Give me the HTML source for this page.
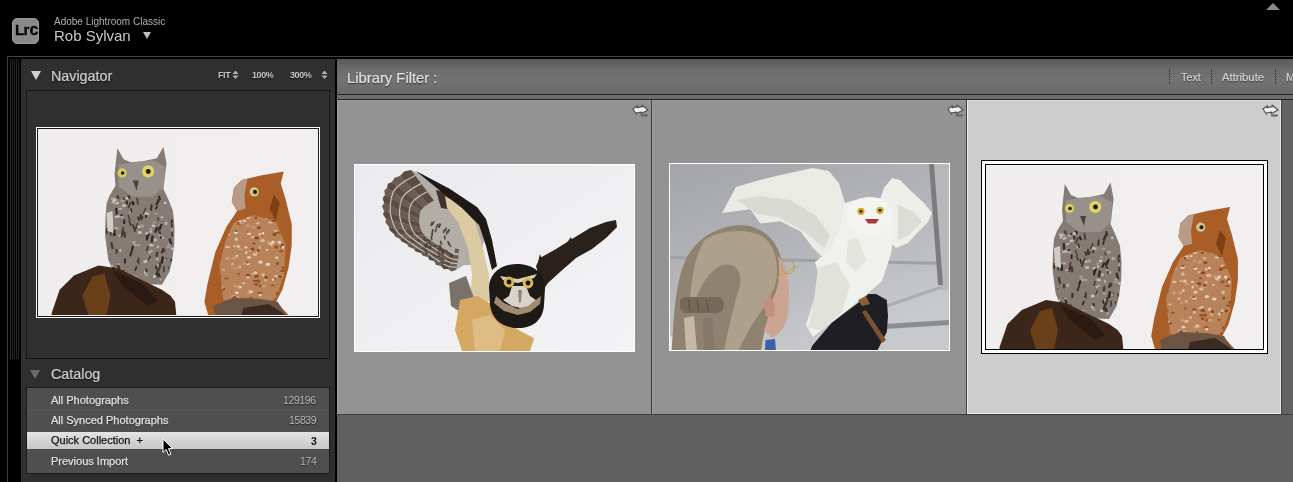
<!DOCTYPE html>
<html><head><meta charset="utf-8">
<style>
*{margin:0;padding:0;box-sizing:border-box}
html,body{width:1293px;height:482px;overflow:hidden;background:#000;font-family:"Liberation Sans",sans-serif;position:relative}
.a{position:absolute;white-space:nowrap;will-change:transform}
#logo{left:12px;top:18px;width:27px;height:26px;background:#8a8a8a;border-radius:5px;border:1px solid #9a9a9a}
#logotxt{left:14.5px;top:20.5px;color:#050505;font-weight:bold;font-size:15px;line-height:17px;letter-spacing:-0.6px;-webkit-text-stroke:0.3px #050505}
#app{left:54px;top:16px;color:#b0b0b0;font-size:10px;line-height:12px}
#user{left:54px;top:27px;color:#c8c8c8;font-size:15px;line-height:17px}
#sep{left:7px;top:56px;width:1286px;height:1px;background:#464646}
#sepv{left:7px;top:56px;width:1px;height:426px;background:#404040}
#leftp{left:21px;top:59px;width:314px;height:423px;background:#2f2f2f}
.stripe{top:59px;width:1px;height:300px;background:#262626}
#navbox{left:26px;top:90px;width:304px;height:269px;background:#303030;border:1px solid #171717}
.hdr{-webkit-text-stroke:0.2px currentColor;color:#cfcfcf;font-size:14.3px;line-height:16px;text-shadow:0 1px 1px #111}
.tri{width:0;height:0;border-left:5px solid transparent;border-right:5px solid transparent;border-top:9px solid #cfcfcf}
.zoom{color:#c4c4c4;font-size:9px;line-height:10px;font-weight:bold;letter-spacing:-0.4px;text-shadow:0 1px 1px #111}
#filter{left:337px;top:59px;width:956px;height:35px;background:linear-gradient(#5a5a5a,#6c6c6c 30%,#737373 60%,#6a6a6a)}
#fline1{left:337px;top:94px;width:956px;height:1px;background:#222}
#fstrip{left:337px;top:95px;width:956px;height:4px;background:#6d6d6d}
#fline2{left:337px;top:99px;width:956px;height:1px;background:#222}
.ftxt{-webkit-text-stroke:0.2px currentColor;color:#d4d4d4;font-size:11.3px;line-height:13px;text-shadow:0 1px 1px #333}
.dots{top:69px;width:1px;height:15px;background:repeating-linear-gradient(#2a2a2a 0 1px,transparent 1px 2px)}
#grid{left:337px;top:100px;width:956px;height:314px;background:#636363}
.cell{top:100px;height:314px;background:#939393;border-left:1px solid #a0a0a0;border-top:1px solid #9d9d9d}
#bottom{left:337px;top:414px;width:956px;height:68px;background:#5f5f5f;border-top:1px solid #3f3f3f}
#catlist{left:26px;top:387px;width:304px;height:87px;background:#4f4f4f;border:1px solid #1a1a1a}
.row{left:27px;width:302px;height:20px}
.rt{-webkit-text-stroke:0.25px currentColor;color:#e2e2e2;font-size:11px;line-height:13px;text-shadow:0 1px 1px #222}
.rn{color:#b8b8b8;font-size:10.5px;letter-spacing:-0.4px;line-height:13px;text-shadow:0 1px 1px #222}
</style></head><body>
<div class="a" id="logo"></div>
<div class="a" id="logotxt">Lr<span style="font-size:16px;margin-left:0.8px">c</span></div>
<div class="a" id="app">Adobe Lightroom Classic</div>
<div class="a" id="user">Rob Sylvan</div>
<div class="a" style="left:143px;top:32px;width:0;height:0;border-left:4px solid transparent;border-right:4px solid transparent;border-top:7px solid #c0c0c0"></div>
<div class="a" style="left:1266px;top:3px;width:0;height:0;border-left:7px solid transparent;border-right:7px solid transparent;border-bottom:7px solid #8a8a8a"></div>

<div class="a" id="sep"></div>
<div class="a" id="sepv"></div>
<div class="a stripe" style="left:10px"></div>
<div class="a stripe" style="left:12px"></div>
<div class="a stripe" style="left:14px"></div>
<div class="a stripe" style="left:16px"></div>
<div class="a stripe" style="left:18px"></div>
<div class="a" id="leftp"></div>

<!-- navigator header -->
<div class="a tri" style="left:31px;top:71px"></div>
<div class="a hdr" style="left:50.5px;top:68px">Navigator</div>
<div class="a zoom" style="left:218px;top:70px">FIT</div><svg class="a" style="left:232px;top:70px" width="7" height="10"><path d="M0.5,4 L3.5,0.5 L6.5,4 Z M0.5,5.5 L3.5,9 L6.5,5.5 Z" fill="#b4b4b4"/></svg>
<div class="a zoom" style="left:252px;top:70px">100%</div>
<div class="a zoom" style="left:290px;top:70px">300%</div><svg class="a" style="left:321px;top:70px" width="7" height="10"><path d="M0.5,4 L3.5,0.5 L6.5,4 Z M0.5,5.5 L3.5,9 L6.5,5.5 Z" fill="#b4b4b4"/></svg>
<div class="a" id="navbox"></div>

<!-- catalog -->
<div class="a tri" style="left:30px;top:370px;border-top-color:#6a6a6a"></div>
<div class="a hdr" style="left:50.5px;top:366px">Catalog</div>
<div class="a" id="catlist"></div>
<div class="a rt" style="left:51px;top:394px">All Photographs</div>
<div class="a rn" style="right:977px;top:394px">129196</div>
<div class="a" style="left:27px;top:410px;width:302px;height:1px;background:#585858"></div><div class="a rt" style="left:51px;top:414px">All Synced Photographs</div>
<div class="a rn" style="right:977px;top:414px">15839</div>
<div class="a row" style="top:432px;height:17px;background:linear-gradient(#e4e4e4,#d4d4d4 50%,#c8c8c8)"></div>
<div class="a rt" style="left:51px;top:434px;color:#111;text-shadow:none">Quick Collection&nbsp; +</div>
<div class="a rn" style="right:977px;top:435px;color:#111;font-weight:bold;text-shadow:none">3</div>
<div class="a rt" style="left:51px;top:454.5px">Previous Import</div>
<div class="a rn" style="right:977px;top:455px">174</div>

<!-- right -->
<div class="a" id="filter"></div>
<div class="a ftxt" style="left:347px;top:69.5px;font-size:14.8px;line-height:16px;color:#e2e2e2;text-shadow:0 1px 1px #2a2a2a">Library Filter :</div>
<div class="a dots" style="left:1169px"></div>
<div class="a ftxt" style="left:1181px;top:71px;font-size:10.8px">Text</div>
<div class="a dots" style="left:1211px"></div>
<div class="a ftxt" style="left:1222px;top:71px">Attribute</div>
<div class="a dots" style="left:1275px"></div>
<div class="a ftxt" style="left:1286px;top:71px">M</div>
<div class="a" id="fline1"></div>
<div class="a" id="fstrip"></div>
<div class="a" id="fline2"></div>
<div class="a" id="grid"></div>
<div class="a cell" style="left:337px;width:314px"></div>
<div class="a" style="left:651px;top:100px;width:1px;height:314px;background:#3c3c3c"></div>
<div class="a cell" style="left:652px;width:314px"></div>
<div class="a" style="left:966px;top:100px;width:1px;height:314px;background:#3c3c3c"></div>
<div class="a cell" style="left:967px;width:314px;background:#cdcdcd;border-left-color:#eee;border-top-color:#ddd;border-right:1px solid #eaeaea;border-bottom:1px solid #eaeaea"></div>
<div class="a" style="left:1281px;top:100px;width:1px;height:314px;background:#3c3c3c"></div>
<div class="a" id="bottom"></div>

<!-- photos -->
<div class="a" style="left:354px;top:164px;width:281px;height:188px;border:1px solid #fff;background:#f0f0f2"></div>
<div class="a" style="left:669px;top:163px;width:281px;height:188px;border:1px solid #fff;background:#d8dadc"></div>
<div class="a" style="left:981px;top:160px;width:287px;height:194px;border:1px solid #000;background:#fff"></div>
<div class="a" style="left:985px;top:164px;width:279px;height:186px;border:1px solid #000;background:#eeeeee"></div>
<div class="a" style="left:36px;top:127px;width:284px;height:191px;border:1px solid #fff;background:#222"></div>
<div class="a" style="left:37px;top:128px;width:282px;height:189px;border:1px solid #1a1a1a;background:#eeeeee"></div>
<svg class="a" style="left:0;top:0" width="1293" height="482" viewBox="0 0 1293 482">
<defs>
<clipPath id="wingclip"><path d="M411,170 L421,174 L450,193 L478,222 L484,240 L478,265 L464,265 L456,270 L448,269 L441,266 L434,261 L421,253 L407,244 L394,234 L387,222 L384,209 L385,195 L392,182 Z"/></clipPath>
<clipPath id="c1"><rect x="355" y="165" width="279" height="186"/></clipPath>
<clipPath id="c2"><rect x="670" y="164" width="279" height="186"/></clipPath>
<clipPath id="c3"><rect x="986" y="165" width="277" height="184"/></clipPath>
<linearGradient id="bg1" x1="0" y1="0" x2="1" y2="1"><stop offset="0" stop-color="#ebeaee"/><stop offset="1" stop-color="#f3f3f5"/></linearGradient>
<linearGradient id="bg2" x1="0" y1="0" x2="0.5" y2="1"><stop offset="0" stop-color="#a4a5a9"/><stop offset="0.5" stop-color="#b3b4b8"/><stop offset="1" stop-color="#c8c9cd"/></linearGradient>
<linearGradient id="bg3" x1="0" y1="0" x2="1" y2="0"><stop offset="0" stop-color="#efeded"/><stop offset="1" stop-color="#f1efef"/></linearGradient>
<g id="p3">
 <rect x="986" y="165" width="277" height="184" fill="url(#bg3)"/>
 <!-- grey owl -->
 <path d="M1064.8,184 L1071,195 L1078,198 L1090,197 L1104,194 L1110.5,182.6 L1113.6,199 L1112,212 L1110.5,224 L1116,236 L1120,246 L1121.5,262 L1121.2,279 L1119,296 L1116.6,306 L1109,319 L1085,318 L1060,304 L1055.7,294 L1052.6,270 L1053,252 L1054,239 L1057,231 L1063,221 L1062,210 L1063,200 Z" fill="#857b74"/>
 <path d="M1066,200 L1082,198 L1100,196 L1112,202 L1111,222 L1100,232 L1080,232 L1066,222 Z" fill="#98908a"/>
 <g clip-path="url(#gob)"><rect x="1084.2" y="279.3" width="2.9" height="2.3" fill="#a8a09a" transform="rotate(-16 1084.2 279.3)"/><rect x="1108.5" y="271.9" width="2.4" height="2.2" fill="#b8b2ae" transform="rotate(-20 1108.5 271.9)"/><rect x="1108.9" y="291.0" width="2.5" height="6.9" fill="#2c2420" transform="rotate(12 1108.9 291.0)"/><rect x="1097.9" y="284.8" width="2.1" height="1.6" fill="#b8b2ae" transform="rotate(5 1097.9 284.8)"/><rect x="1106.7" y="258.7" width="2.4" height="1.9" fill="#c8c4c0" transform="rotate(-0 1106.7 258.7)"/><rect x="1098.7" y="270.2" width="2.5" height="7.0" fill="#3a2e28" transform="rotate(10 1098.7 270.2)"/><rect x="1074.8" y="250.2" width="1.3" height="6.1" fill="#4a3c32" transform="rotate(-20 1074.8 250.2)"/><rect x="1073.1" y="235.9" width="2.1" height="3.9" fill="#3a2e28" transform="rotate(-2 1073.1 235.9)"/><rect x="1120.6" y="265.0" width="2.0" height="6.1" fill="#4a3c32" transform="rotate(-8 1120.6 265.0)"/><rect x="1074.5" y="231.3" width="2.4" height="3.5" fill="#2c2420" transform="rotate(-20 1074.5 231.3)"/><rect x="1057.1" y="300.1" width="1.9" height="4.8" fill="#3a2e28" transform="rotate(24 1057.1 300.1)"/><rect x="1106.1" y="266.9" width="1.7" height="7.0" fill="#3a2e28" transform="rotate(-12 1106.1 266.9)"/><rect x="1120.0" y="300.7" width="2.4" height="3.8" fill="#4a3c32" transform="rotate(25 1120.0 300.7)"/><rect x="1094.5" y="280.8" width="1.4" height="4.8" fill="#3a2e28" transform="rotate(14 1094.5 280.8)"/><rect x="1075.7" y="256.1" width="1.3" height="5.3" fill="#3a2e28" transform="rotate(-24 1075.7 256.1)"/><rect x="1078.4" y="284.7" width="2.0" height="6.3" fill="#3a2e28" transform="rotate(18 1078.4 284.7)"/><rect x="1065.6" y="243.6" width="3.6" height="1.9" fill="#b8b2ae" transform="rotate(-17 1065.6 243.6)"/><rect x="1096.4" y="278.7" width="2.8" height="2.2" fill="#b8b2ae" transform="rotate(-4 1096.4 278.7)"/><rect x="1060.2" y="233.4" width="2.5" height="2.6" fill="#c8c4c0" transform="rotate(-4 1060.2 233.4)"/><rect x="1115.4" y="273.2" width="2.4" height="6.9" fill="#3a2e28" transform="rotate(-14 1115.4 273.2)"/><rect x="1091.6" y="305.0" width="2.6" height="2.9" fill="#b8b2ae" transform="rotate(12 1091.6 305.0)"/><rect x="1057.8" y="266.2" width="1.3" height="4.1" fill="#2c2420" transform="rotate(4 1057.8 266.2)"/><rect x="1062.1" y="261.9" width="4.0" height="2.5" fill="#a8a09a" transform="rotate(1 1062.1 261.9)"/><rect x="1118.3" y="281.9" width="2.9" height="2.0" fill="#c8c4c0" transform="rotate(23 1118.3 281.9)"/><rect x="1054.5" y="286.0" width="2.1" height="4.3" fill="#3a2e28" transform="rotate(-21 1054.5 286.0)"/><rect x="1090.7" y="294.9" width="3.5" height="2.6" fill="#c8c4c0" transform="rotate(-7 1090.7 294.9)"/><rect x="1100.3" y="309.3" width="2.8" height="2.7" fill="#c8c4c0" transform="rotate(4 1100.3 309.3)"/><rect x="1096.1" y="263.6" width="3.2" height="1.6" fill="#a8a09a" transform="rotate(-19 1096.1 263.6)"/><rect x="1070.7" y="266.6" width="2.4" height="5.8" fill="#4a3c32" transform="rotate(-3 1070.7 266.6)"/><rect x="1110.8" y="237.4" width="2.1" height="2.4" fill="#c8c4c0" transform="rotate(-24 1110.8 237.4)"/><rect x="1119.1" y="239.9" width="3.3" height="2.2" fill="#b8b2ae" transform="rotate(-7 1119.1 239.9)"/><rect x="1062.9" y="283.8" width="2.2" height="4.4" fill="#4a3c32" transform="rotate(-0 1062.9 283.8)"/><rect x="1069.7" y="265.6" width="2.0" height="6.2" fill="#3a2e28" transform="rotate(19 1069.7 265.6)"/><rect x="1079.5" y="281.3" width="1.4" height="5.0" fill="#3a2e28" transform="rotate(11 1079.5 281.3)"/><rect x="1118.6" y="254.4" width="1.8" height="4.1" fill="#3a2e28" transform="rotate(17 1118.6 254.4)"/><rect x="1079.4" y="275.8" width="3.4" height="2.8" fill="#a8a09a" transform="rotate(-2 1079.4 275.8)"/><rect x="1058.2" y="232.8" width="2.1" height="2.6" fill="#a8a09a" transform="rotate(-7 1058.2 232.8)"/><rect x="1097.8" y="279.6" width="2.8" height="1.8" fill="#c8c4c0" transform="rotate(-13 1097.8 279.6)"/><rect x="1062.7" y="234.1" width="2.9" height="2.4" fill="#a8a09a" transform="rotate(7 1062.7 234.1)"/><rect x="1078.4" y="236.9" width="2.3" height="4.0" fill="#2c2420" transform="rotate(-24 1078.4 236.9)"/><rect x="1085.6" y="292.8" width="1.6" height="4.4" fill="#2c2420" transform="rotate(22 1085.6 292.8)"/><rect x="1087.5" y="317.7" width="2.3" height="5.8" fill="#3a2e28" transform="rotate(-21 1087.5 317.7)"/><rect x="1117.3" y="293.6" width="1.8" height="5.5" fill="#3a2e28" transform="rotate(-6 1117.3 293.6)"/><rect x="1092.2" y="307.4" width="3.9" height="2.2" fill="#a8a09a" transform="rotate(24 1092.2 307.4)"/><rect x="1059.8" y="306.2" width="3.8" height="1.7" fill="#b8b2ae" transform="rotate(20 1059.8 306.2)"/><rect x="1120.7" y="316.0" width="2.2" height="4.3" fill="#2c2420" transform="rotate(18 1120.7 316.0)"/><rect x="1077.0" y="237.3" width="1.9" height="6.1" fill="#4a3c32" transform="rotate(21 1077.0 237.3)"/><rect x="1068.1" y="306.3" width="1.2" height="5.1" fill="#2c2420" transform="rotate(14 1068.1 306.3)"/><rect x="1062.7" y="243.1" width="2.1" height="6.4" fill="#2c2420" transform="rotate(-3 1062.7 243.1)"/><rect x="1113.7" y="280.9" width="3.5" height="2.2" fill="#a8a09a" transform="rotate(-10 1113.7 280.9)"/><rect x="1103.3" y="286.2" width="2.3" height="5.2" fill="#4a3c32" transform="rotate(9 1103.3 286.2)"/><rect x="1118.9" y="306.6" width="2.6" height="1.7" fill="#a8a09a" transform="rotate(1 1118.9 306.6)"/><rect x="1092.5" y="247.7" width="1.9" height="5.4" fill="#3a2e28" transform="rotate(2 1092.5 247.7)"/><rect x="1056.0" y="310.7" width="2.5" height="3.5" fill="#3a2e28" transform="rotate(10 1056.0 310.7)"/><rect x="1057.5" y="277.4" width="2.4" height="6.7" fill="#4a3c32" transform="rotate(-13 1057.5 277.4)"/><rect x="1087.0" y="259.9" width="3.9" height="2.9" fill="#a8a09a" transform="rotate(-9 1087.0 259.9)"/><rect x="1066.2" y="284.4" width="2.3" height="2.7" fill="#b8b2ae" transform="rotate(-23 1066.2 284.4)"/><rect x="1063.7" y="231.0" width="2.1" height="4.0" fill="#4a3c32" transform="rotate(-20 1063.7 231.0)"/><rect x="1103.4" y="240.8" width="1.5" height="3.8" fill="#2c2420" transform="rotate(19 1103.4 240.8)"/><rect x="1054.6" y="285.7" width="3.2" height="2.3" fill="#a8a09a" transform="rotate(2 1054.6 285.7)"/><rect x="1068.1" y="249.0" width="2.0" height="3.5" fill="#2c2420" transform="rotate(6 1068.1 249.0)"/><rect x="1077.0" y="245.9" width="3.8" height="1.8" fill="#b8b2ae" transform="rotate(19 1077.0 245.9)"/><rect x="1062.2" y="251.1" width="2.5" height="1.6" fill="#c8c4c0" transform="rotate(2 1062.2 251.1)"/><rect x="1101.6" y="247.7" width="3.6" height="1.6" fill="#a8a09a" transform="rotate(9 1101.6 247.7)"/><rect x="1115.9" y="315.2" width="1.9" height="6.0" fill="#2c2420" transform="rotate(25 1115.9 315.2)"/><rect x="1110.5" y="300.7" width="1.2" height="6.0" fill="#2c2420" transform="rotate(1 1110.5 300.7)"/><rect x="1092.2" y="242.9" width="1.5" height="6.4" fill="#4a3c32" transform="rotate(21 1092.2 242.9)"/><rect x="1059.6" y="235.5" width="2.9" height="2.6" fill="#c8c4c0" transform="rotate(-5 1059.6 235.5)"/><rect x="1082.4" y="261.2" width="1.7" height="5.5" fill="#3a2e28" transform="rotate(17 1082.4 261.2)"/><rect x="1065.5" y="269.9" width="2.8" height="1.8" fill="#b8b2ae" transform="rotate(-20 1065.5 269.9)"/><rect x="1107.7" y="258.5" width="2.3" height="6.5" fill="#2c2420" transform="rotate(22 1107.7 258.5)"/><rect x="1092.3" y="246.8" width="2.7" height="2.6" fill="#c8c4c0" transform="rotate(21 1092.3 246.8)"/><rect x="1104.4" y="298.5" width="2.8" height="2.8" fill="#a8a09a" transform="rotate(10 1104.4 298.5)"/><rect x="1105.9" y="297.3" width="2.1" height="3.3" fill="#4a3c32" transform="rotate(-10 1105.9 297.3)"/><rect x="1060.0" y="308.1" width="3.8" height="1.6" fill="#c8c4c0" transform="rotate(22 1060.0 308.1)"/><rect x="1099.0" y="259.7" width="3.1" height="2.3" fill="#c8c4c0" transform="rotate(1 1099.0 259.7)"/><rect x="1087.3" y="248.8" width="1.7" height="5.3" fill="#3a2e28" transform="rotate(6 1087.3 248.8)"/><rect x="1104.0" y="252.6" width="1.3" height="3.8" fill="#4a3c32" transform="rotate(-24 1104.0 252.6)"/><rect x="1070.8" y="254.3" width="1.9" height="4.7" fill="#2c2420" transform="rotate(3 1070.8 254.3)"/><rect x="1121.7" y="286.1" width="2.2" height="2.4" fill="#b8b2ae" transform="rotate(-6 1121.7 286.1)"/><rect x="1117.8" y="264.0" width="3.7" height="2.3" fill="#a8a09a" transform="rotate(-22 1117.8 264.0)"/><rect x="1118.2" y="267.0" width="2.0" height="4.5" fill="#4a3c32" transform="rotate(-1 1118.2 267.0)"/><rect x="1071.6" y="311.8" width="3.5" height="1.5" fill="#b8b2ae" transform="rotate(4 1071.6 311.8)"/><rect x="1096.7" y="266.0" width="2.1" height="2.0" fill="#c8c4c0" transform="rotate(-22 1096.7 266.0)"/><rect x="1121.2" y="313.1" width="2.4" height="4.7" fill="#4a3c32" transform="rotate(-12 1121.2 313.1)"/><rect x="1105.1" y="234.0" width="2.3" height="6.6" fill="#3a2e28" transform="rotate(24 1105.1 234.0)"/><rect x="1109.4" y="283.1" width="2.0" height="4.8" fill="#3a2e28" transform="rotate(18 1109.4 283.1)"/><rect x="1077.6" y="243.6" width="1.4" height="4.7" fill="#2c2420" transform="rotate(-12 1077.6 243.6)"/><rect x="1093.2" y="266.9" width="3.1" height="3.0" fill="#c8c4c0" transform="rotate(12 1093.2 266.9)"/><rect x="1069.5" y="240.0" width="3.6" height="2.4" fill="#c8c4c0" transform="rotate(-11 1069.5 240.0)"/><rect x="1095.1" y="293.8" width="2.4" height="1.9" fill="#b8b2ae" transform="rotate(-16 1095.1 293.8)"/><rect x="1070.2" y="316.2" width="3.8" height="1.6" fill="#b8b2ae" transform="rotate(-25 1070.2 316.2)"/><rect x="1070.9" y="232.4" width="1.5" height="4.1" fill="#3a2e28" transform="rotate(21 1070.9 232.4)"/><rect x="1064.1" y="250.7" width="3.0" height="2.0" fill="#c8c4c0" transform="rotate(-8 1064.1 250.7)"/><rect x="1104.4" y="303.8" width="1.4" height="6.2" fill="#2c2420" transform="rotate(17 1104.4 303.8)"/><rect x="1106.1" y="269.1" width="2.8" height="1.7" fill="#b8b2ae" transform="rotate(8 1106.1 269.1)"/><rect x="1121.3" y="258.6" width="2.2" height="6.7" fill="#4a3c32" transform="rotate(8 1121.3 258.6)"/><rect x="1093.1" y="270.7" width="1.9" height="4.7" fill="#2c2420" transform="rotate(-1 1093.1 270.7)"/><rect x="1100.3" y="256.3" width="2.2" height="1.8" fill="#a8a09a" transform="rotate(5 1100.3 256.3)"/><rect x="1101.0" y="273.5" width="2.7" height="2.8" fill="#b8b2ae" transform="rotate(-7 1101.0 273.5)"/><rect x="1103.1" y="262.2" width="2.1" height="5.3" fill="#2c2420" transform="rotate(21 1103.1 262.2)"/><rect x="1083.2" y="300.7" width="1.6" height="4.6" fill="#2c2420" transform="rotate(20 1083.2 300.7)"/><rect x="1070.1" y="261.8" width="1.7" height="4.6" fill="#4a3c32" transform="rotate(15 1070.1 261.8)"/><rect x="1104.0" y="262.4" width="1.4" height="5.4" fill="#3a2e28" transform="rotate(-16 1104.0 262.4)"/><rect x="1105.4" y="307.5" width="1.2" height="5.1" fill="#2c2420" transform="rotate(-17 1105.4 307.5)"/><rect x="1073.4" y="232.0" width="2.8" height="2.4" fill="#c8c4c0" transform="rotate(14 1073.4 232.0)"/><rect x="1058.8" y="237.2" width="3.8" height="1.6" fill="#a8a09a" transform="rotate(8 1058.8 237.2)"/><rect x="1059.7" y="301.8" width="2.1" height="5.0" fill="#2c2420" transform="rotate(-8 1059.7 301.8)"/><rect x="1084.7" y="260.8" width="2.7" height="1.7" fill="#c8c4c0" transform="rotate(2 1084.7 260.8)"/><rect x="1102.7" y="292.3" width="2.8" height="2.7" fill="#a8a09a" transform="rotate(-8 1102.7 292.3)"/><rect x="1053.3" y="263.3" width="1.8" height="5.2" fill="#3a2e28" transform="rotate(1 1053.3 263.3)"/><rect x="1102.0" y="300.6" width="1.7" height="3.6" fill="#2c2420" transform="rotate(-17 1102.0 300.6)"/><rect x="1096.8" y="290.2" width="1.7" height="5.1" fill="#4a3c32" transform="rotate(23 1096.8 290.2)"/><rect x="1057.1" y="257.1" width="2.0" height="6.1" fill="#3a2e28" transform="rotate(21 1057.1 257.1)"/><rect x="1105.0" y="231.5" width="2.2" height="4.3" fill="#3a2e28" transform="rotate(-16 1105.0 231.5)"/><rect x="1068.0" y="250.7" width="3.2" height="1.8" fill="#b8b2ae" transform="rotate(20 1068.0 250.7)"/><rect x="1080.8" y="310.1" width="3.3" height="2.9" fill="#a8a09a" transform="rotate(-1 1080.8 310.1)"/><rect x="1071.0" y="308.1" width="2.7" height="2.3" fill="#b8b2ae" transform="rotate(-1 1071.0 308.1)"/><rect x="1068.2" y="234.4" width="3.6" height="2.1" fill="#a8a09a" transform="rotate(15 1068.2 234.4)"/><rect x="1106.4" y="299.3" width="2.4" height="6.6" fill="#4a3c32" transform="rotate(20 1106.4 299.3)"/><rect x="1084.1" y="251.7" width="2.3" height="4.7" fill="#4a3c32" transform="rotate(-18 1084.1 251.7)"/><rect x="1115.7" y="301.3" width="2.2" height="5.5" fill="#2c2420" transform="rotate(2 1115.7 301.3)"/><rect x="1063.4" y="297.8" width="2.3" height="6.4" fill="#3a2e28" transform="rotate(-21 1063.4 297.8)"/><rect x="1071.6" y="293.1" width="1.8" height="4.9" fill="#2c2420" transform="rotate(4 1071.6 293.1)"/><rect x="1112.2" y="256.7" width="2.8" height="2.9" fill="#b8b2ae" transform="rotate(14 1112.2 256.7)"/><rect x="1083.4" y="233.3" width="1.8" height="6.8" fill="#4a3c32" transform="rotate(-9 1083.4 233.3)"/><rect x="1081.0" y="279.0" width="3.3" height="1.6" fill="#b8b2ae" transform="rotate(9 1081.0 279.0)"/><rect x="1060.3" y="264.7" width="2.5" height="6.3" fill="#2c2420" transform="rotate(-3 1060.3 264.7)"/><rect x="1112.6" y="292.6" width="1.6" height="3.5" fill="#3a2e28" transform="rotate(18 1112.6 292.6)"/><rect x="1111.3" y="293.3" width="2.3" height="2.4" fill="#a8a09a" transform="rotate(12 1111.3 293.3)"/><rect x="1118.8" y="296.4" width="2.2" height="1.8" fill="#c8c4c0" transform="rotate(12 1118.8 296.4)"/><rect x="1075.7" y="313.2" width="3.4" height="2.0" fill="#c8c4c0" transform="rotate(-20 1075.7 313.2)"/><rect x="1062.7" y="238.3" width="3.4" height="1.8" fill="#c8c4c0" transform="rotate(-23 1062.7 238.3)"/><rect x="1085.0" y="291.9" width="1.2" height="6.9" fill="#4a3c32" transform="rotate(-5 1085.0 291.9)"/><rect x="1058.0" y="311.0" width="1.9" height="5.6" fill="#3a2e28" transform="rotate(16 1058.0 311.0)"/><rect x="1079.6" y="259.2" width="1.2" height="4.6" fill="#2c2420" transform="rotate(-9 1079.6 259.2)"/><rect x="1107.4" y="251.6" width="3.1" height="1.9" fill="#b8b2ae" transform="rotate(-8 1107.4 251.6)"/><rect x="1097.9" y="239.4" width="1.9" height="6.2" fill="#3a2e28" transform="rotate(6 1097.9 239.4)"/><rect x="1063.9" y="297.5" width="3.1" height="2.0" fill="#a8a09a" transform="rotate(1 1063.9 297.5)"/><rect x="1092.6" y="247.4" width="4.0" height="2.6" fill="#b8b2ae" transform="rotate(3 1092.6 247.4)"/><rect x="1054.8" y="288.0" width="2.3" height="2.2" fill="#c8c4c0" transform="rotate(10 1054.8 288.0)"/><rect x="1075.7" y="311.8" width="1.8" height="3.5" fill="#2c2420" transform="rotate(-18 1075.7 311.8)"/><rect x="1115.4" y="277.8" width="3.1" height="1.9" fill="#a8a09a" transform="rotate(25 1115.4 277.8)"/><rect x="1109.4" y="282.9" width="2.3" height="4.2" fill="#4a3c32" transform="rotate(-13 1109.4 282.9)"/><rect x="1092.6" y="303.1" width="1.9" height="3.3" fill="#3a2e28" transform="rotate(-5 1092.6 303.1)"/><rect x="1107.0" y="311.8" width="2.3" height="2.6" fill="#a8a09a" transform="rotate(20 1107.0 311.8)"/><rect x="1095.5" y="286.3" width="2.3" height="2.1" fill="#b8b2ae" transform="rotate(-18 1095.5 286.3)"/><rect x="1079.7" y="280.1" width="1.9" height="4.1" fill="#2c2420" transform="rotate(22 1079.7 280.1)"/><rect x="1056.7" y="299.0" width="3.6" height="2.1" fill="#c8c4c0" transform="rotate(5 1056.7 299.0)"/><rect x="1085.4" y="266.2" width="3.4" height="2.6" fill="#c8c4c0" transform="rotate(-1 1085.4 266.2)"/><rect x="1121.6" y="303.8" width="2.8" height="2.2" fill="#a8a09a" transform="rotate(-19 1121.6 303.8)"/><rect x="1117.8" y="259.1" width="1.7" height="3.1" fill="#3a2e28" transform="rotate(-10 1117.8 259.1)"/><rect x="1095.5" y="268.1" width="1.6" height="6.2" fill="#2c2420" transform="rotate(19 1095.5 268.1)"/><rect x="1069.9" y="304.3" width="2.3" height="6.9" fill="#4a3c32" transform="rotate(10 1069.9 304.3)"/><rect x="1089.3" y="251.0" width="1.7" height="3.9" fill="#3a2e28" transform="rotate(25 1089.3 251.0)"/><rect x="1103.4" y="306.7" width="1.9" height="5.3" fill="#3a2e28" transform="rotate(-14 1103.4 306.7)"/><rect x="1104.5" y="279.9" width="2.2" height="2.7" fill="#b8b2ae" transform="rotate(19 1104.5 279.9)"/><rect x="1092.7" y="269.9" width="2.1" height="3.1" fill="#3a2e28" transform="rotate(-22 1092.7 269.9)"/><rect x="1114.8" y="301.8" width="1.7" height="5.3" fill="#3a2e28" transform="rotate(-10 1114.8 301.8)"/><rect x="1084.4" y="257.6" width="1.4" height="6.1" fill="#4a3c32" transform="rotate(19 1084.4 257.6)"/></g>
 <path d="M1054,248 L1060,246 L1061,268 L1055,266 Z" fill="#d0ccc8"/>
 <circle cx="1069.5" cy="208.5" r="4.6" fill="#dccc5a"/><circle cx="1070" cy="208.5" r="1.8" fill="#181818"/>
 <circle cx="1095.3" cy="207" r="6.1" fill="#e2d264"/><circle cx="1095.5" cy="207" r="2.4" fill="#181818"/>
 <path d="M1080,216 L1086,216 L1084,226 Z" fill="#4a4038"/>
 <!-- rufous owl -->
 <path d="M1230,207 L1227,219 L1231.7,234 L1237.9,259 L1237.9,280 L1234.8,302 L1228.6,324 L1222.4,336 L1234.8,349 L1155,349 L1151.2,336 L1154.3,318 L1162,287 L1173,262 L1183.7,246 L1178.4,237 L1180.6,223 L1188.3,215.5 L1207,211 Z" fill="#a95d27"/>
 <path d="M1180,258 L1200,250 L1222,256 L1232,280 L1230,310 L1222,334 L1195,340 L1170,334 L1166,300 L1172,276 Z" fill="#b8825a"/>
 <g clip-path="url(#gor)"><ellipse cx="1204.8" cy="315.3" rx="2.2" ry="1.7" fill="#9c5420"/><ellipse cx="1206.9" cy="296.6" rx="2.3" ry="1.6" fill="#e6d2bc"/><ellipse cx="1206.7" cy="329.3" rx="1.4" ry="1.3" fill="#e6d2bc"/><ellipse cx="1187.4" cy="259.0" rx="1.6" ry="1.5" fill="#8e4a1c"/><ellipse cx="1180.1" cy="330.6" rx="2.2" ry="1.0" fill="#dcc0a4"/><ellipse cx="1170.0" cy="304.3" rx="1.4" ry="0.9" fill="#dcc0a4"/><ellipse cx="1175.1" cy="269.0" rx="2.5" ry="1.6" fill="#c89c78"/><ellipse cx="1182.6" cy="267.5" rx="2.3" ry="1.4" fill="#e6d2bc"/><ellipse cx="1227.8" cy="310.8" rx="2.5" ry="1.7" fill="#c89c78"/><ellipse cx="1161.6" cy="286.5" rx="2.4" ry="1.1" fill="#c89c78"/><ellipse cx="1181.7" cy="303.1" rx="1.3" ry="1.5" fill="#c89c78"/><ellipse cx="1164.8" cy="281.3" rx="1.6" ry="1.5" fill="#e6d2bc"/><ellipse cx="1194.6" cy="312.0" rx="1.3" ry="1.7" fill="#dcc0a4"/><ellipse cx="1228.3" cy="281.5" rx="1.8" ry="1.4" fill="#8e4a1c"/><ellipse cx="1186.4" cy="300.9" rx="1.3" ry="0.9" fill="#e6d2bc"/><ellipse cx="1204.9" cy="334.0" rx="1.4" ry="1.1" fill="#8e4a1c"/><ellipse cx="1184.8" cy="281.2" rx="1.9" ry="1.6" fill="#dcc0a4"/><ellipse cx="1202.5" cy="318.7" rx="1.7" ry="1.2" fill="#8e4a1c"/><ellipse cx="1228.1" cy="258.0" rx="1.7" ry="1.4" fill="#e6d2bc"/><ellipse cx="1184.5" cy="331.3" rx="1.9" ry="1.2" fill="#c89c78"/><ellipse cx="1182.0" cy="320.3" rx="2.0" ry="1.5" fill="#c89c78"/><ellipse cx="1231.8" cy="264.2" rx="1.3" ry="1.7" fill="#d4b090"/><ellipse cx="1226.5" cy="252.8" rx="2.2" ry="1.2" fill="#c89c78"/><ellipse cx="1192.8" cy="287.1" rx="1.3" ry="1.7" fill="#dcc0a4"/><ellipse cx="1217.7" cy="279.4" rx="1.5" ry="1.7" fill="#d4b090"/><ellipse cx="1228.4" cy="305.5" rx="2.2" ry="1.0" fill="#8e4a1c"/><ellipse cx="1186.9" cy="255.2" rx="1.8" ry="1.0" fill="#d4b090"/><ellipse cx="1221.4" cy="335.9" rx="1.8" ry="1.3" fill="#9c5420"/><ellipse cx="1182.9" cy="274.1" rx="1.8" ry="1.7" fill="#dcc0a4"/><ellipse cx="1187.1" cy="337.0" rx="2.4" ry="1.4" fill="#8e4a1c"/><ellipse cx="1222.5" cy="265.9" rx="1.9" ry="1.3" fill="#d4b090"/><ellipse cx="1222.5" cy="281.8" rx="2.2" ry="1.6" fill="#9c5420"/><ellipse cx="1202.3" cy="253.0" rx="1.6" ry="1.4" fill="#9c5420"/><ellipse cx="1180.2" cy="292.7" rx="2.2" ry="1.5" fill="#c89c78"/><ellipse cx="1228.9" cy="279.9" rx="1.5" ry="1.6" fill="#8e4a1c"/><ellipse cx="1199.4" cy="272.1" rx="2.1" ry="1.3" fill="#d4b090"/><ellipse cx="1206.6" cy="320.2" rx="1.7" ry="1.4" fill="#9c5420"/><ellipse cx="1227.5" cy="285.9" rx="2.4" ry="1.0" fill="#9c5420"/><ellipse cx="1192.4" cy="282.1" rx="1.7" ry="1.0" fill="#e6d2bc"/><ellipse cx="1174.3" cy="281.9" rx="2.3" ry="1.1" fill="#dcc0a4"/><ellipse cx="1211.8" cy="314.3" rx="1.5" ry="1.6" fill="#d4b090"/><ellipse cx="1197.2" cy="332.4" rx="1.6" ry="1.4" fill="#9c5420"/><ellipse cx="1179.5" cy="337.6" rx="1.5" ry="1.4" fill="#d4b090"/><ellipse cx="1206.8" cy="269.3" rx="2.1" ry="1.4" fill="#dcc0a4"/><ellipse cx="1231.0" cy="336.2" rx="1.5" ry="1.7" fill="#dcc0a4"/><ellipse cx="1182.8" cy="266.0" rx="1.5" ry="0.9" fill="#8e4a1c"/><ellipse cx="1185.3" cy="308.3" rx="1.3" ry="1.1" fill="#9c5420"/><ellipse cx="1225.0" cy="250.1" rx="1.8" ry="1.1" fill="#8e4a1c"/><ellipse cx="1222.4" cy="310.6" rx="1.9" ry="1.7" fill="#d4b090"/><ellipse cx="1204.2" cy="258.3" rx="1.9" ry="1.2" fill="#d4b090"/><ellipse cx="1181.1" cy="280.9" rx="1.4" ry="1.2" fill="#d4b090"/><ellipse cx="1206.2" cy="282.5" rx="1.4" ry="1.4" fill="#d4b090"/><ellipse cx="1194.3" cy="267.5" rx="1.4" ry="1.0" fill="#9c5420"/><ellipse cx="1160.1" cy="259.5" rx="2.0" ry="1.4" fill="#e6d2bc"/><ellipse cx="1183.4" cy="327.1" rx="2.0" ry="1.3" fill="#e6d2bc"/><ellipse cx="1195.5" cy="292.2" rx="2.1" ry="1.2" fill="#e6d2bc"/><ellipse cx="1202.9" cy="272.9" rx="2.5" ry="1.3" fill="#8e4a1c"/><ellipse cx="1161.4" cy="333.2" rx="1.6" ry="1.7" fill="#e6d2bc"/><ellipse cx="1194.3" cy="260.7" rx="2.0" ry="1.3" fill="#c89c78"/><ellipse cx="1162.9" cy="262.0" rx="1.7" ry="1.3" fill="#d4b090"/><ellipse cx="1179.7" cy="332.3" rx="2.2" ry="1.1" fill="#c89c78"/><ellipse cx="1220.8" cy="313.5" rx="1.6" ry="1.3" fill="#8e4a1c"/><ellipse cx="1197.3" cy="326.0" rx="2.4" ry="1.7" fill="#dcc0a4"/><ellipse cx="1214.7" cy="276.5" rx="1.9" ry="1.2" fill="#c89c78"/><ellipse cx="1212.7" cy="252.3" rx="1.7" ry="1.5" fill="#d4b090"/><ellipse cx="1169.5" cy="250.2" rx="1.9" ry="1.5" fill="#dcc0a4"/><ellipse cx="1223.9" cy="298.0" rx="1.3" ry="1.6" fill="#8e4a1c"/><ellipse cx="1202.8" cy="310.6" rx="2.4" ry="1.5" fill="#8e4a1c"/><ellipse cx="1194.3" cy="310.0" rx="2.1" ry="1.7" fill="#8e4a1c"/><ellipse cx="1219.8" cy="255.8" rx="2.3" ry="1.5" fill="#8e4a1c"/><ellipse cx="1201.9" cy="307.1" rx="1.8" ry="1.2" fill="#e6d2bc"/><ellipse cx="1194.4" cy="298.3" rx="1.9" ry="1.2" fill="#e6d2bc"/><ellipse cx="1190.6" cy="297.6" rx="1.3" ry="1.5" fill="#c89c78"/><ellipse cx="1219.0" cy="319.7" rx="2.1" ry="0.9" fill="#9c5420"/><ellipse cx="1190.9" cy="256.0" rx="1.8" ry="1.3" fill="#dcc0a4"/><ellipse cx="1220.6" cy="269.3" rx="2.1" ry="1.7" fill="#9c5420"/><ellipse cx="1224.4" cy="337.5" rx="2.1" ry="1.3" fill="#e6d2bc"/><ellipse cx="1204.0" cy="286.4" rx="1.5" ry="1.4" fill="#dcc0a4"/><ellipse cx="1200.0" cy="308.1" rx="2.2" ry="1.1" fill="#d4b090"/><ellipse cx="1201.4" cy="315.3" rx="2.3" ry="1.0" fill="#8e4a1c"/><ellipse cx="1166.6" cy="310.3" rx="1.9" ry="1.2" fill="#9c5420"/><ellipse cx="1186.9" cy="254.9" rx="2.1" ry="1.0" fill="#9c5420"/><ellipse cx="1208.8" cy="275.5" rx="2.4" ry="1.4" fill="#e6d2bc"/><ellipse cx="1179.0" cy="298.5" rx="1.6" ry="1.5" fill="#d4b090"/><ellipse cx="1230.2" cy="321.1" rx="2.3" ry="1.3" fill="#8e4a1c"/><ellipse cx="1172.9" cy="312.8" rx="2.1" ry="1.0" fill="#9c5420"/><ellipse cx="1162.6" cy="326.0" rx="1.9" ry="1.3" fill="#8e4a1c"/><ellipse cx="1223.1" cy="292.3" rx="1.7" ry="1.6" fill="#dcc0a4"/><ellipse cx="1199.0" cy="283.8" rx="2.3" ry="1.7" fill="#8e4a1c"/><ellipse cx="1209.0" cy="269.6" rx="1.4" ry="1.7" fill="#9c5420"/><ellipse cx="1195.4" cy="268.6" rx="2.1" ry="1.2" fill="#e6d2bc"/><ellipse cx="1180.9" cy="331.9" rx="2.1" ry="1.6" fill="#8e4a1c"/><ellipse cx="1169.8" cy="323.1" rx="2.1" ry="1.6" fill="#8e4a1c"/><ellipse cx="1229.2" cy="281.9" rx="1.3" ry="1.7" fill="#e6d2bc"/><ellipse cx="1213.3" cy="284.8" rx="1.4" ry="0.9" fill="#e6d2bc"/><ellipse cx="1174.1" cy="293.1" rx="2.4" ry="1.5" fill="#c89c78"/><ellipse cx="1160.0" cy="291.4" rx="2.4" ry="1.4" fill="#8e4a1c"/><ellipse cx="1183.3" cy="290.6" rx="1.5" ry="1.5" fill="#dcc0a4"/><ellipse cx="1187.0" cy="283.9" rx="2.4" ry="1.0" fill="#c89c78"/><ellipse cx="1167.9" cy="322.0" rx="2.2" ry="1.5" fill="#dcc0a4"/><ellipse cx="1194.7" cy="252.8" rx="2.4" ry="1.2" fill="#dcc0a4"/><ellipse cx="1209.5" cy="309.3" rx="1.8" ry="1.7" fill="#dcc0a4"/><ellipse cx="1216.5" cy="278.5" rx="1.8" ry="1.1" fill="#e6d2bc"/><ellipse cx="1162.4" cy="312.9" rx="2.0" ry="1.5" fill="#d4b090"/><ellipse cx="1188.9" cy="335.7" rx="1.7" ry="1.2" fill="#8e4a1c"/><ellipse cx="1186.0" cy="255.9" rx="2.5" ry="1.3" fill="#e6d2bc"/><ellipse cx="1172.6" cy="268.4" rx="1.3" ry="1.4" fill="#9c5420"/><ellipse cx="1230.2" cy="250.6" rx="1.3" ry="1.6" fill="#8e4a1c"/><ellipse cx="1172.2" cy="252.9" rx="2.3" ry="1.6" fill="#d4b090"/><ellipse cx="1185.2" cy="258.3" rx="1.3" ry="1.7" fill="#8e4a1c"/><ellipse cx="1166.6" cy="291.5" rx="2.1" ry="1.4" fill="#8e4a1c"/><ellipse cx="1188.6" cy="255.3" rx="1.6" ry="1.2" fill="#c89c78"/><ellipse cx="1206.1" cy="327.0" rx="2.4" ry="1.1" fill="#9c5420"/><ellipse cx="1196.6" cy="285.4" rx="1.9" ry="1.0" fill="#c89c78"/><ellipse cx="1216.9" cy="257.6" rx="2.5" ry="1.0" fill="#dcc0a4"/><ellipse cx="1221.7" cy="268.9" rx="1.3" ry="1.4" fill="#8e4a1c"/><ellipse cx="1190.5" cy="317.6" rx="1.9" ry="1.0" fill="#dcc0a4"/><ellipse cx="1225.7" cy="277.1" rx="1.8" ry="1.6" fill="#e6d2bc"/><ellipse cx="1199.9" cy="262.2" rx="1.9" ry="1.6" fill="#c89c78"/><ellipse cx="1219.0" cy="277.5" rx="1.4" ry="1.0" fill="#e6d2bc"/><ellipse cx="1210.2" cy="320.3" rx="2.5" ry="1.5" fill="#c89c78"/><ellipse cx="1164.4" cy="311.7" rx="1.3" ry="1.1" fill="#c89c78"/><ellipse cx="1223.6" cy="327.9" rx="1.3" ry="1.6" fill="#8e4a1c"/><ellipse cx="1214.2" cy="298.9" rx="2.4" ry="1.5" fill="#e6d2bc"/><ellipse cx="1201.4" cy="288.9" rx="2.3" ry="1.5" fill="#dcc0a4"/><ellipse cx="1212.4" cy="311.7" rx="1.6" ry="1.6" fill="#8e4a1c"/><ellipse cx="1200.5" cy="278.3" rx="1.6" ry="1.0" fill="#8e4a1c"/><ellipse cx="1208.7" cy="275.1" rx="1.3" ry="1.5" fill="#d4b090"/><ellipse cx="1162.0" cy="260.7" rx="2.5" ry="1.6" fill="#8e4a1c"/><ellipse cx="1221.9" cy="333.5" rx="2.0" ry="1.1" fill="#8e4a1c"/><ellipse cx="1169.0" cy="267.7" rx="1.7" ry="1.0" fill="#d4b090"/><ellipse cx="1219.5" cy="314.0" rx="1.4" ry="1.4" fill="#e6d2bc"/><ellipse cx="1205.4" cy="262.7" rx="2.2" ry="1.3" fill="#8e4a1c"/><ellipse cx="1168.5" cy="277.9" rx="2.4" ry="1.3" fill="#8e4a1c"/><ellipse cx="1172.3" cy="254.3" rx="2.1" ry="1.0" fill="#8e4a1c"/><ellipse cx="1229.8" cy="302.4" rx="1.4" ry="1.6" fill="#8e4a1c"/><ellipse cx="1209.4" cy="268.3" rx="1.3" ry="1.7" fill="#e6d2bc"/><ellipse cx="1194.7" cy="327.6" rx="1.7" ry="1.1" fill="#c89c78"/><ellipse cx="1219.2" cy="276.7" rx="1.9" ry="1.5" fill="#e6d2bc"/><ellipse cx="1186.4" cy="321.2" rx="2.3" ry="1.5" fill="#dcc0a4"/><ellipse cx="1204.5" cy="285.3" rx="1.4" ry="1.6" fill="#8e4a1c"/><ellipse cx="1187.5" cy="258.3" rx="1.7" ry="1.5" fill="#c89c78"/><ellipse cx="1224.8" cy="267.5" rx="2.2" ry="1.2" fill="#9c5420"/><ellipse cx="1193.9" cy="297.0" rx="1.4" ry="1.1" fill="#9c5420"/><ellipse cx="1160.7" cy="295.0" rx="2.0" ry="1.1" fill="#8e4a1c"/><ellipse cx="1161.6" cy="309.7" rx="2.0" ry="1.3" fill="#d4b090"/><ellipse cx="1194.3" cy="311.9" rx="1.7" ry="1.7" fill="#d4b090"/><ellipse cx="1226.5" cy="311.0" rx="2.1" ry="1.4" fill="#8e4a1c"/><ellipse cx="1186.1" cy="302.2" rx="2.1" ry="1.3" fill="#c89c78"/><ellipse cx="1180.6" cy="252.4" rx="2.2" ry="1.4" fill="#9c5420"/></g>
 <path d="M1180.6,223 L1188.3,215.5 L1194,214 L1191,230 L1192,244 L1183.7,246 L1178.4,237 Z" fill="#b89a86"/>
 <circle cx="1200.7" cy="227.2" r="4.6" fill="#cfc48a"/><circle cx="1201.5" cy="227.2" r="2" fill="#1c1c1c"/>
 <path d="M1160,340 L1180,332 L1205,333 L1224,336 L1232,349 L1162,349 Z" fill="#6a5444"/><path d="M1190,342 L1215,338 L1232,349 L1188,349 Z" fill="#3a2a22"/>
 <path d="M1220,230 L1226,238 L1222,256 L1216,244 Z" fill="#7e3e16"/>
 <!-- glove -->
 <path d="M999.6,349 L999.6,347 L1007.5,324 L1021.8,310 L1046,300 L1066,303 L1086,313 L1109,324 L1117.6,330 L1122,336 L1123.3,349 Z" fill="#3b2619"/>
 <path d="M1030,330 L1040,311 L1052,308 L1058,330 L1054,349 L1036,349 Z" fill="#6a4018"/>
 <path d="M1060,305 L1090,318 L1105,335 L1095,340 L1070,320 Z" fill="#2a1a12"/>
</g>
<clipPath id="gob"><path d="M1054,232 L1063,224 L1112,226 L1120,246 L1121,290 L1109,319 L1060,304 L1053,270 Z"/></clipPath>
<clipPath id="gor"><path d="M1180,258 L1200,250 L1222,256 L1232,280 L1230,310 L1222,334 L1195,340 L1170,334 L1166,300 L1172,276 Z"/></clipPath>
</defs>

<!-- photo 1: spectacled owl -->
<g clip-path="url(#c1)">
 <rect x="355" y="165" width="279" height="186" fill="url(#bg1)"/>
 <!-- left wing -->
 <path d="M411,170 L421,174 L450,193 L478,222 L484,240 L478,265 L464,265 L456,270 L448,269 L441,266 L434,261 L421,253 L407,244 L394,234 L387,222 L384,209 L385,195 L392,182 Z" fill="#b2ada6"/>
 <path d="M433.9,200.6 L411,170 L404.2,171.5 L400,176 L427.9,203.9 Z" fill="#5a4c43"/><line x1="427.3" y1="191.8" x2="419.8" y2="195.8" stroke="#c8c2ba" stroke-width="1.2"/><line x1="421.2" y1="183.6" x2="412.4" y2="188.4" stroke="#c8c2ba" stroke-width="1.2"/><line x1="415.1" y1="175.4" x2="405.0" y2="181.0" stroke="#c8c2ba" stroke-width="1.2"/><path d="M427.9,203.9 L400,176 L394.5,177.7 L392,182 L423.5,207.2 Z" fill="#6a5c52"/><line x1="419.8" y1="195.8" x2="414.4" y2="199.9" stroke="#c8c2ba" stroke-width="1.2"/><line x1="412.4" y1="188.4" x2="406.0" y2="193.2" stroke="#c8c2ba" stroke-width="1.2"/><line x1="405.0" y1="181.0" x2="397.6" y2="186.5" stroke="#c8c2ba" stroke-width="1.2"/><path d="M423.5,207.2 L392,182 L387.9,183.8 L387,188 L420.8,210.5 Z" fill="#5a4c43"/><line x1="414.4" y1="199.9" x2="411.0" y2="204.0" stroke="#c8c2ba" stroke-width="1.2"/><line x1="406.0" y1="193.2" x2="402.0" y2="198.0" stroke="#c8c2ba" stroke-width="1.2"/><line x1="397.6" y1="186.5" x2="393.0" y2="192.0" stroke="#c8c2ba" stroke-width="1.2"/><path d="M420.8,210.5 L387,188 L384.3,190.5 L385,195 L419.6,214.3 Z" fill="#6a5c52"/><line x1="411.0" y1="204.0" x2="409.6" y2="208.8" stroke="#c8c2ba" stroke-width="1.2"/><line x1="402.0" y1="198.0" x2="400.4" y2="203.6" stroke="#c8c2ba" stroke-width="1.2"/><line x1="393.0" y1="192.0" x2="391.2" y2="198.4" stroke="#c8c2ba" stroke-width="1.2"/><path d="M419.6,214.3 L385,195 L382.7,198.1 L384,203 L419.1,218.8 Z" fill="#5a4c43"/><line x1="409.6" y1="208.8" x2="409.0" y2="214.2" stroke="#c8c2ba" stroke-width="1.2"/><line x1="400.4" y1="203.6" x2="399.6" y2="210.0" stroke="#c8c2ba" stroke-width="1.2"/><line x1="391.2" y1="198.4" x2="390.2" y2="205.8" stroke="#c8c2ba" stroke-width="1.2"/><path d="M419.1,218.8 L384,203 L382.1,206.3 L384,211 L419.1,223.2 Z" fill="#6a5c52"/><line x1="409.0" y1="214.2" x2="409.0" y2="219.6" stroke="#c8c2ba" stroke-width="1.2"/><line x1="399.6" y1="210.0" x2="399.6" y2="216.4" stroke="#c8c2ba" stroke-width="1.2"/><line x1="390.2" y1="205.8" x2="390.2" y2="213.2" stroke="#c8c2ba" stroke-width="1.2"/><path d="M419.1,223.2 L384,211 L383.1,214.4 L386,219 L420.2,227.6 Z" fill="#5a4c43"/><line x1="409.0" y1="219.6" x2="410.3" y2="225.1" stroke="#c8c2ba" stroke-width="1.2"/><line x1="399.6" y1="216.4" x2="401.2" y2="222.8" stroke="#c8c2ba" stroke-width="1.2"/><line x1="390.2" y1="213.2" x2="392.1" y2="220.5" stroke="#c8c2ba" stroke-width="1.2"/><path d="M420.2,227.6 L386,219 L385.5,222.6 L389,227 L421.9,231.9 Z" fill="#6a5c52"/><line x1="410.3" y1="225.1" x2="412.4" y2="230.5" stroke="#c8c2ba" stroke-width="1.2"/><line x1="401.2" y1="222.8" x2="403.6" y2="229.2" stroke="#c8c2ba" stroke-width="1.2"/><line x1="392.1" y1="220.5" x2="394.8" y2="227.9" stroke="#c8c2ba" stroke-width="1.2"/><path d="M421.9,231.9 L389,227 L389.5,230.3 L394,234 L424.6,235.8 Z" fill="#5a4c43"/><line x1="412.4" y1="230.5" x2="415.8" y2="235.3" stroke="#c8c2ba" stroke-width="1.2"/><line x1="403.6" y1="229.2" x2="407.6" y2="234.8" stroke="#c8c2ba" stroke-width="1.2"/><line x1="394.8" y1="227.9" x2="399.4" y2="234.3" stroke="#c8c2ba" stroke-width="1.2"/><path d="M424.6,235.8 L394,234 L395.0,236.5 L400,239 L427.9,238.6 Z" fill="#6a5c52"/><line x1="415.8" y1="235.3" x2="419.8" y2="238.7" stroke="#c8c2ba" stroke-width="1.2"/><line x1="407.6" y1="234.8" x2="412.4" y2="238.8" stroke="#c8c2ba" stroke-width="1.2"/><line x1="399.4" y1="234.3" x2="405.0" y2="238.9" stroke="#c8c2ba" stroke-width="1.2"/><path d="M427.9,238.6 L400,239 L401.5,241.6 L407,244 L431.8,241.3 Z" fill="#5a4c43"/><line x1="419.8" y1="238.7" x2="424.6" y2="242.1" stroke="#c8c2ba" stroke-width="1.2"/><line x1="412.4" y1="238.8" x2="418.0" y2="242.8" stroke="#c8c2ba" stroke-width="1.2"/><line x1="405.0" y1="238.9" x2="411.4" y2="243.5" stroke="#c8c2ba" stroke-width="1.2"/><path d="M431.8,241.3 L407,244 L408.5,246.8 L414,249 L435.6,244.1 Z" fill="#6a5c52"/><line x1="424.6" y1="242.1" x2="429.4" y2="245.5" stroke="#c8c2ba" stroke-width="1.2"/><line x1="418.0" y1="242.8" x2="423.6" y2="246.8" stroke="#c8c2ba" stroke-width="1.2"/><line x1="411.4" y1="243.5" x2="417.8" y2="248.1" stroke="#c8c2ba" stroke-width="1.2"/><path d="M435.6,244.1 L414,249 L415.6,251.6 L421,253 L439.4,246.2 Z" fill="#5a4c43"/><line x1="429.4" y1="245.5" x2="434.1" y2="248.2" stroke="#c8c2ba" stroke-width="1.2"/><line x1="423.6" y1="246.8" x2="429.2" y2="250.0" stroke="#c8c2ba" stroke-width="1.2"/><line x1="417.8" y1="248.1" x2="424.3" y2="251.8" stroke="#c8c2ba" stroke-width="1.2"/><path d="M439.4,246.2 L421,253 L422.7,255.8 L428,257 L443.3,248.4 Z" fill="#6a5c52"/><line x1="434.1" y1="248.2" x2="438.9" y2="250.9" stroke="#c8c2ba" stroke-width="1.2"/><line x1="429.2" y1="250.0" x2="434.8" y2="253.2" stroke="#c8c2ba" stroke-width="1.2"/><line x1="424.3" y1="251.8" x2="430.7" y2="255.5" stroke="#c8c2ba" stroke-width="1.2"/><path d="M443.3,248.4 L428,257 L429.3,260.1 L434,261 L446.6,250.7 Z" fill="#5a4c43"/><line x1="438.9" y1="250.9" x2="443.0" y2="253.6" stroke="#c8c2ba" stroke-width="1.2"/><line x1="434.8" y1="253.2" x2="439.6" y2="256.4" stroke="#c8c2ba" stroke-width="1.2"/><line x1="430.7" y1="255.5" x2="436.2" y2="259.2" stroke="#c8c2ba" stroke-width="1.2"/><path d="M446.6,250.7 L434,261 L436.1,264.9 L441,266 L450.4,253.4 Z" fill="#6a5c52"/><line x1="443.0" y1="253.6" x2="447.7" y2="257.0" stroke="#c8c2ba" stroke-width="1.2"/><line x1="439.6" y1="256.4" x2="445.2" y2="260.4" stroke="#c8c2ba" stroke-width="1.2"/><line x1="436.2" y1="259.2" x2="442.7" y2="263.8" stroke="#c8c2ba" stroke-width="1.2"/><path d="M450.4,253.4 L441,266 L443.5,269.2 L448,269 L454.3,255.1 Z" fill="#5a4c43"/><line x1="447.7" y1="257.0" x2="452.5" y2="259.1" stroke="#c8c2ba" stroke-width="1.2"/><line x1="445.2" y1="260.4" x2="450.8" y2="262.8" stroke="#c8c2ba" stroke-width="1.2"/><line x1="442.7" y1="263.8" x2="449.1" y2="266.5" stroke="#c8c2ba" stroke-width="1.2"/><path d="M454.3,255.1 L448,269 L451.4,271.4 L456,270 L458.7,255.6 Z" fill="#6a5c52"/><line x1="452.5" y1="259.1" x2="457.9" y2="259.8" stroke="#c8c2ba" stroke-width="1.2"/><line x1="450.8" y1="262.8" x2="457.2" y2="263.6" stroke="#c8c2ba" stroke-width="1.2"/><line x1="449.1" y1="266.5" x2="456.5" y2="267.4" stroke="#c8c2ba" stroke-width="1.2"/>
 <g clip-path="url(#wingclip)"><rect x="444.2" y="239.6" width="4" height="1.6" fill="#4e423a" transform="rotate(-96 444.2 239.6)"/><rect x="450.5" y="247.3" width="4" height="1.6" fill="#4e423a" transform="rotate(-132 450.5 247.3)"/><rect x="440.6" y="248.8" width="4" height="1.6" fill="#4e423a" transform="rotate(-119 440.6 248.8)"/><rect x="435.6" y="227.5" width="4" height="1.6" fill="#4e423a" transform="rotate(-66 435.6 227.5)"/><rect x="438.1" y="227.5" width="4" height="1.6" fill="#4e423a" transform="rotate(-64 438.1 227.5)"/><rect x="447.2" y="232.5" width="4" height="1.6" fill="#4e423a" transform="rotate(-68 447.2 232.5)"/><rect x="425.0" y="248.1" width="4" height="1.6" fill="#4e423a" transform="rotate(-107 425.0 248.1)"/><rect x="442.7" y="232.9" width="4" height="1.6" fill="#4e423a" transform="rotate(-74 442.7 232.9)"/><rect x="429.1" y="262.3" width="4" height="1.6" fill="#4e423a" transform="rotate(-129 429.1 262.3)"/><rect x="440.8" y="250.7" width="4" height="1.6" fill="#4e423a" transform="rotate(-123 440.8 250.7)"/><rect x="458.8" y="251.0" width="4" height="1.6" fill="#4e423a" transform="rotate(-167 458.8 251.0)"/><rect x="452.5" y="256.1" width="4" height="1.6" fill="#4e423a" transform="rotate(-154 452.5 256.1)"/><rect x="445.7" y="234.3" width="4" height="1.6" fill="#4e423a" transform="rotate(-76 445.7 234.3)"/><rect x="423.8" y="240.4" width="4" height="1.6" fill="#4e423a" transform="rotate(-94 423.8 240.4)"/><rect x="431.4" y="233.0" width="4" height="1.6" fill="#4e423a" transform="rotate(-80 431.4 233.0)"/><rect x="443.2" y="252.5" width="4" height="1.6" fill="#4e423a" transform="rotate(-130 443.2 252.5)"/><rect x="448.9" y="244.9" width="4" height="1.6" fill="#4e423a" transform="rotate(-120 448.9 244.9)"/><rect x="444.1" y="230.9" width="4" height="1.6" fill="#4e423a" transform="rotate(-67 444.1 230.9)"/><rect x="443.3" y="254.9" width="4" height="1.6" fill="#4e423a" transform="rotate(-135 443.3 254.9)"/><rect x="430.9" y="240.3" width="4" height="1.6" fill="#4e423a" transform="rotate(-95 430.9 240.3)"/><rect x="440.9" y="244.9" width="4" height="1.6" fill="#4e423a" transform="rotate(-110 440.9 244.9)"/><rect x="443.3" y="264.6" width="4" height="1.6" fill="#4e423a" transform="rotate(-147 443.3 264.6)"/><rect x="431.2" y="236.5" width="4" height="1.6" fill="#4e423a" transform="rotate(-87 431.2 236.5)"/><rect x="426.5" y="255.0" width="4" height="1.6" fill="#4e423a" transform="rotate(-118 426.5 255.0)"/><rect x="447.9" y="253.4" width="4" height="1.6" fill="#4e423a" transform="rotate(-140 447.9 253.4)"/><rect x="458.4" y="253.0" width="4" height="1.6" fill="#4e423a" transform="rotate(-168 458.4 253.0)"/><rect x="426.9" y="247.1" width="4" height="1.6" fill="#4e423a" transform="rotate(-106 426.9 247.1)"/><rect x="434.5" y="232.1" width="4" height="1.6" fill="#4e423a" transform="rotate(-77 434.5 232.1)"/><rect x="431.6" y="224.7" width="4" height="1.6" fill="#4e423a" transform="rotate(-64 431.6 224.7)"/><rect x="443.9" y="260.7" width="4" height="1.6" fill="#4e423a" transform="rotate(-144 443.9 260.7)"/><rect x="452.8" y="257.0" width="4" height="1.6" fill="#4e423a" transform="rotate(-156 452.8 257.0)"/><rect x="440.3" y="258.8" width="4" height="1.6" fill="#4e423a" transform="rotate(-136 440.3 258.8)"/><rect x="439.4" y="251.8" width="4" height="1.6" fill="#4e423a" transform="rotate(-124 439.4 251.8)"/><rect x="442.4" y="272.1" width="4" height="1.6" fill="#4e423a" transform="rotate(-152 442.4 272.1)"/><rect x="430.8" y="249.5" width="4" height="1.6" fill="#4e423a" transform="rotate(-112 430.8 249.5)"/><rect x="430.0" y="225.5" width="4" height="1.6" fill="#4e423a" transform="rotate(-67 430.0 225.5)"/><rect x="429.0" y="264.2" width="4" height="1.6" fill="#4e423a" transform="rotate(-131 429.0 264.2)"/><rect x="451.2" y="255.4" width="4" height="1.6" fill="#4e423a" transform="rotate(-150 451.2 255.4)"/><rect x="429.0" y="244.6" width="4" height="1.6" fill="#4e423a" transform="rotate(-102 429.0 244.6)"/><rect x="437.7" y="226.5" width="4" height="1.6" fill="#4e423a" transform="rotate(-62 437.7 226.5)"/></g>
 <path d="M436,190 L449,193 L453,210 L441,208 Z" fill="#3e342e"/>
 <!-- tan band -->
 <path d="M445,196 L460,205 L475,222 L483,248 L489,275 L489,300 L480,312 L470,302 L472,275 L468,248 L458,222 L447,208 Z" fill="#dccaa2"/>
 <!-- black leading edge -->
 <path d="M416,171 L450,189 L477,207 L486,219 L492,240 L497,266 L492,270 L486,246 L479,225 L462,208 L444,194 Z" fill="#1e1915"/>
 <!-- grey lower feathers -->
 <path d="M449,283 L466,276 L474,298 L462,313 L451,306 Z" fill="#7a726a"/>
 <!-- body tan -->
 <path d="M460,300 L478,296 L494,306 L506,322 L522,332 L534,338 L530,351 L462,351 L455,330 Z" fill="#d4a862"/>
 <path d="M472,320 L490,315 L505,330 L500,351 L475,351 Z" fill="#ddbd84"/>
 <!-- right wing -->
 <path d="M536,266 L540,258 L556,249 L572,239 L590,228 L606,222 L616,220 L617,227 L606,238 L592,249 L576,258 L560,272 L548,283 L543,290 Z" fill="#2b211c"/>
 <path d="M538,262 L540,254 L543,262 Z M566,244 L571,237 L573,243 Z" fill="#2b211c"/>
 <!-- head + bib -->
 <path d="M489,288 C489,273 502,264 517,264 C533,264 545,273 545,288 L544,305 C543,320 533,328 518,328 C503,328 492,320 490,305 Z" fill="#1d1916"/>
 <path d="M496,296 L504,303 L518,309 L532,303 L541,296 L540,304 L530,312 L518,315 L504,311 L494,303 Z" fill="#a08a70"/>
 <!-- facial -->
 <path d="M500,276 L518,279 L537,274 L534,278 L518,283 L503,280 Z" fill="#ddd2b8"/>
 <path d="M512,286 L526,286 L530,296 L536,300 L528,306 L520,308 L512,306 L503,300 L509,296 Z" fill="#d8d4cc"/><path d="M518,290 L522,290 L521,302 L519,303 Z" fill="#8a8680"/>
 <circle cx="509" cy="282" r="5.4" fill="#d9b650"/><circle cx="509" cy="282" r="2.4" fill="#111"/>
 <circle cx="528" cy="283" r="5.4" fill="#d9b650"/><circle cx="528" cy="283" r="2.4" fill="#111"/>
</g>

<!-- photo 2: snowy owl + woman -->
<g clip-path="url(#c2)">
 <rect x="670" y="164" width="279" height="186" fill="url(#bg2)"/>
 <path d="M670,256 L949,262 L949,265 L670,259 Z" fill="#a0a1a5"/>
 <path d="M885,305 L949,283 L949,286 L885,308 Z" fill="#a8aaae"/>
 <path d="M885,324 L949,320 L949,325 L885,329 Z" fill="#8c8d92"/>
 <path d="M670,336 L700,350 L670,350 Z" fill="#e6e7ea"/>
 <path d="M934,164 L949,164 L949,290 L941,290 Z" fill="#b8b8bc"/><path d="M929,164 L934,164 L943,285 L938,285 Z" fill="#7e7c7a"/>
 <!-- woman hair -->
 <path d="M671.5,351 L673,330 C675,300 678,270 690,252 C702,235 720,226 740,225 C760,225 776,238 781,258 C784,275 782,292 776,302 L768,318 C765,330 762,340 761,351 Z" fill="#908270"/>
 <path d="M705,240 C720,230 745,228 762,236 C775,245 779,262 776,282 C772,298 760,312 750,328 L738,351 L724,351 C728,330 734,305 740,285 C742,270 735,262 722,265 C710,270 700,285 694,305 L690,300 C692,275 695,255 705,240 Z" fill="#ada18c"/>
 <path d="M684,318 L694,316 L697,351 L686,351 Z" fill="#c4b9a4"/>
 <path d="M703,318 L712,318 L714,351 L704,351 Z" fill="#85776a"/>
 <path d="M680,300 L684,297 L720,297 L724,302 L723,310 L718,313 L684,313 L680,309 Z" fill="#746a5a"/>
 <path d="M688,299 L690,311 M697,299 L699,311 M706,299 L708,311" stroke="#5a5246" stroke-width="1"/>
 <!-- face / ear -->
 <path d="M778,256 C784,262 788,272 789,290 L788,315 C786,326 780,334 772,338 L764,330 L770,312 L772,300 C778,290 781,275 778,256 Z" fill="#cca592"/>
 <path d="M763,301 L770,296 L775,304 L774,316 L766,317 Z" fill="#c0917e"/>
 <path d="M777,278 L797,266" stroke="#caa64c" stroke-width="1.4"/>
 <ellipse cx="788" cy="267" rx="6.5" ry="7" fill="none" stroke="#b89a60" stroke-width="0.9"/>
 <path d="M765.5,340 L775,339 L776,351 L765,351 Z" fill="#3a62a8"/>
 <!-- owl left wing -->
 <path d="M722,213 L736,187 L760,180 L780.5,175 L812.7,168 L828.8,171 L838.8,183 L845,203 L847,223 L845,243.5 L835,262 L824.7,259.6 L812.7,247.5 L800.6,231.4 L780.5,221.3 L760.4,223.4 L750.3,209.3 Z" fill="#ebebe6"/>
 <path d="M736,200 L760,196 L790,200 L815,215 L830,235 L824,248 L805,232 L780,218 L758,214 Z" fill="#dadad4"/>
 <!-- right wing -->
 <path d="M880,200 L884,188 L892,178 L900,180 L912,192 L924,203 L932,213 L928,222 L918,232 L908,243 L896,248 L888,240 Z" fill="#eeeeea"/>
 <path d="M898,205 L914,212 L922,222 L908,236 L898,240 Z" fill="#dddcd6"/>
 <!-- body -->
 <path d="M845,203 L862,198 L882,198 L893,212 L893,240 L891,254 L882,281 L866,295 L842,314 L822,330 L813,337 L806,325 L814,300 L822,286 L815,262 L830,250 L840,228 Z" fill="#f0f0ec"/>
 <path d="M818,268 L836,262 L850,285 L842,312 L822,330 L808,328 L814,300 Z" fill="#e2e2dc"/>
 <path d="M848,240 L858,238 L866,260 L856,272 L846,262 Z" fill="#e4e4de"/>
 <ellipse cx="870" cy="216" rx="23" ry="19" fill="#f3f3f0"/>
 <circle cx="861" cy="211.3" r="3.6" fill="#d9a622"/><circle cx="861" cy="211.3" r="1.4" fill="#222"/>
 <circle cx="880" cy="210.3" r="3.6" fill="#d9a622"/><circle cx="880" cy="210.3" r="1.4" fill="#222"/>
 <path d="M865,219 L879,219 L876,223.5 L868,223.5 Z" fill="#a83a44"/>
 <!-- glove -->
 <path d="M810.7,350 L812,346 L831.5,323 L850,309 L862,300 L868.3,294 L876,294 L886.8,300 L888,316 L886.8,332 L877.6,350 Z" fill="#1f1f23"/>
 <path d="M862,312 L866,310 L886,340 L882,343 Z" fill="#7a5232"/>
 <path d="M858,300 L866,296 L870,304 L862,306 Z" fill="#8a6038"/>
</g>

<!-- photo 3 -->
<g clip-path="url(#c3)"><use href="#p3"/></g>
<!-- navigator copy -->
<g clip-path="url(#cn)"><use href="#p3" transform="translate(38,129) scale(1.0072,1.0109) translate(-986,-165)"/></g>
<defs><clipPath id="cn"><rect x="38" y="129" width="279" height="186"/></clipPath></defs>
</svg>

<svg class="a" style="left:0;top:0" width="1293" height="482">
<defs><g id="swap"><path d="M0.5,4 L5,0.8 L4.5,2.6 L10,1.6 L9.5,0 L15.5,5 L8.5,8.8 L9,7 L3.5,8 L4,9.3 Z" fill="#f0f0f0" stroke="#505050" stroke-width="1.1" stroke-linejoin="round"/><rect x="8.5" y="9.6" width="7" height="2" rx="1" fill="#606060"/></g></defs>
<use href="#swap" x="632.5" y="105"/>
<use href="#swap" x="947.5" y="105"/>
<use href="#swap" x="1262.5" y="105"/>
<path d="M163,439 L163,452.5 L166.2,449.4 L168.6,455.2 L170.9,454.2 L168.5,448.6 L172.6,448.6 Z" fill="#000" stroke="#fff" stroke-width="1" stroke-linejoin="round"/>
</svg>
</body></html>
